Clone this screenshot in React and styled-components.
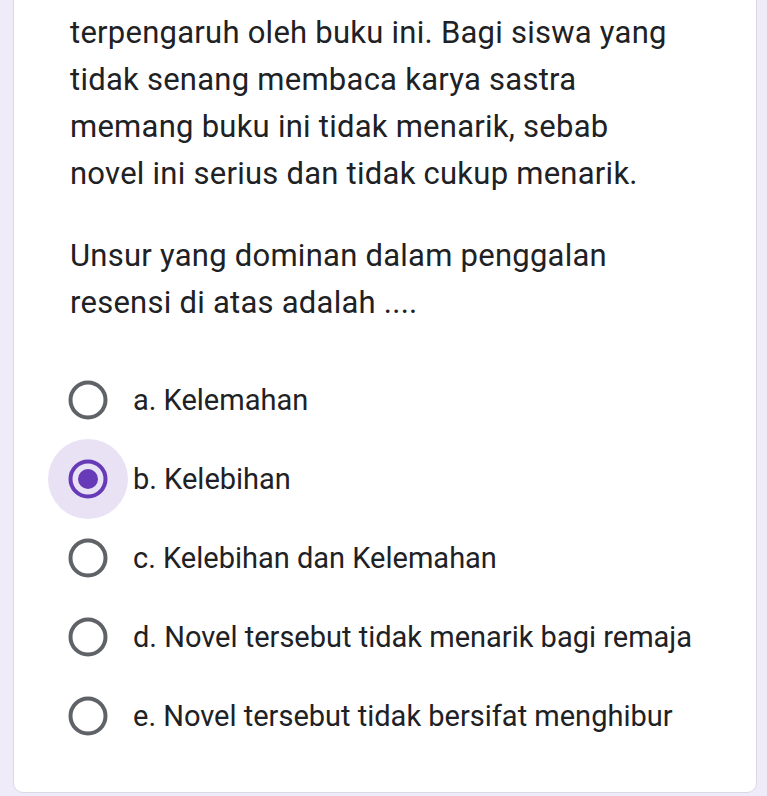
import React, { useState } from "react";
import styled, { createGlobalStyle } from "styled-components";

const GlobalStyle = createGlobalStyle`
  html, body {
    margin: 0;
    padding: 0;
    background: #f0ebf8;
    overflow: hidden;
  }
  body {
    font-family: Roboto, "Noto Sans", "Liberation Sans", sans-serif;
    color: #202124;
  }
`;

const Page = styled.div`
  height: 796px;
  overflow: hidden;
`;

const Card = styled.div`
  margin: -24px 10px 0 13px;
  height: 817px;
  box-sizing: border-box;
  background: #ffffff;
  border: 1px solid #dcd8e3;
  border-radius: 0 0 10px 10px;
  padding: 32px 20px 0 56px;
`;

const Paragraph = styled.p`
  margin: 0;
  font-size: 31px;
  line-height: 47px;
  letter-spacing: 0.25px;
  color: #202124;
  margin-top: ${(p) => p.gap || 0}px;
`;

const OptionList = styled.div`
  margin: 34px 0 0 -22px;
  display: flex;
  flex-direction: column;
`;

const OptionRow = styled.label`
  display: flex;
  align-items: center;
  height: 79px;
  cursor: pointer;
`;

const RadioHalo = styled.span`
  width: 80px;
  height: 80px;
  border-radius: 50%;
  display: flex;
  align-items: center;
  justify-content: center;
  flex-shrink: 0;
  background: ${(p) => (p.active ? "#e9e2f5" : "transparent")};
`;

const OptionText = styled.span`
  margin-left: 5px;
  font-size: 29px;
  color: #202124;
`;

function RadioIcon({ checked }) {
  const color = checked ? "#673ab7" : "#5f6368";
  return (
    <svg width="40" height="40" viewBox="0 0 40 40">
      <circle cx="20" cy="20" r="17.5" fill="none" stroke={color} strokeWidth="4" />
      {checked && <circle cx="20" cy="20" r="10" fill={color} />}
    </svg>
  );
}

const options = [
  "a. Kelemahan",
  "b. Kelebihan",
  "c. Kelebihan dan Kelemahan",
  "d. Novel tersebut tidak menarik bagi remaja",
  "e. Novel tersebut tidak bersifat menghibur",
];

export default function App() {
  const [selected, setSelected] = useState(1);
  return (
    <Page>
      <GlobalStyle />
      <Card>
        <Paragraph>
          terpengaruh oleh buku ini. Bagi siswa yang
          <br />
          tidak senang membaca karya sastra
          <br />
          memang buku ini tidak menarik, sebab
          <br />
          novel ini serius dan tidak cukup menarik.
        </Paragraph>
        <Paragraph gap={35}>
          Unsur yang dominan dalam penggalan
          <br />
          resensi di atas adalah ....
        </Paragraph>
        <OptionList>
          {options.map((o, i) => (
            <OptionRow key={o} onClick={() => setSelected(i)}>
              <RadioHalo active={selected === i}>
                <RadioIcon checked={selected === i} />
              </RadioHalo>
              <OptionText>{o}</OptionText>
            </OptionRow>
          ))}
        </OptionList>
      </Card>
    </Page>
  );
}
